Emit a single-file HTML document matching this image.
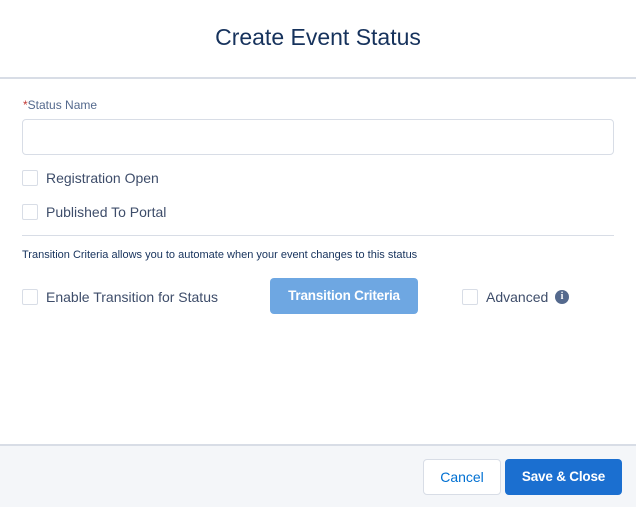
<!DOCTYPE html>
<html><head><style>
*{box-sizing:border-box;margin:0;padding:0}
body{width:636px;height:507px;background:#fff;font-family:"Liberation Sans",sans-serif;color:#16325c;position:relative;overflow:hidden}
.abs{position:absolute}
.cb{position:absolute;width:16px;height:16px;border:1px solid #d8dde6;border-radius:2px;background:#fff}
.lbl{position:absolute;font-size:14px;color:#3e4d6a}
</style></head><body>
<div class="abs" style="left:0;top:24px;width:636px;text-align:center;font-size:23px;color:#16325c">Create Event Status</div>
<div class="abs" style="left:0;top:77px;width:636px;height:2px;background:#d8dde6"></div>
<div class="abs" style="left:23px;top:98px;font-size:12px;color:#54698d"><span style="color:#c23934">*</span>Status Name</div>
<div class="abs" style="left:22px;top:119px;width:592px;height:36px;border:1px solid #d8dde6;border-radius:4px"></div>
<div class="cb" style="left:22px;top:170px"></div><div class="lbl" style="left:46px;top:170px">Registration Open</div>
<div class="cb" style="left:22px;top:204px"></div><div class="lbl" style="left:46px;top:204px">Published To Portal</div>
<div class="abs" style="left:22px;top:235px;width:592px;height:1px;background:#d8dde6"></div>
<div class="abs" style="left:22px;top:249px;font-size:11px;color:#16325c">Transition Criteria allows you to automate when your event changes to this status</div>
<div class="cb" style="left:22px;top:289px"></div><div class="lbl" style="left:46px;top:289px">Enable Transition for Status</div>
<div class="abs" style="left:270px;top:278px;width:148px;height:36px;background:#6ea7e2;border-radius:4px;color:#fff;font-size:13.5px;font-weight:bold;text-align:center;line-height:36px;letter-spacing:-0.2px">Transition Criteria</div>
<div class="cb" style="left:462px;top:289px"></div><div class="lbl" style="left:486px;top:289px">Advanced</div>
<div class="abs" style="left:555px;top:290px;width:14px;height:14px;border-radius:50%;background:#54698d;color:#fff;font-size:10px;font-weight:bold;text-align:center;line-height:14px;font-family:'Liberation Serif',serif">i</div>
<div class="abs" style="left:0;top:444px;width:636px;height:63px;background:#f4f6f9;border-top:2px solid #d8dde6"></div>
<div class="abs" style="left:423px;top:459px;width:78px;height:36px;border:1px solid #d8dde6;border-radius:4px;background:#fff;color:#0070d2;font-size:14px;text-align:center;line-height:34px">Cancel</div>
<div class="abs" style="left:505px;top:459px;width:117px;height:36px;border-radius:4px;background:#1b6fd0;color:#fff;font-size:13.5px;font-weight:bold;text-align:center;line-height:36px;letter-spacing:-0.2px">Save &amp; Close</div>
</body></html>
